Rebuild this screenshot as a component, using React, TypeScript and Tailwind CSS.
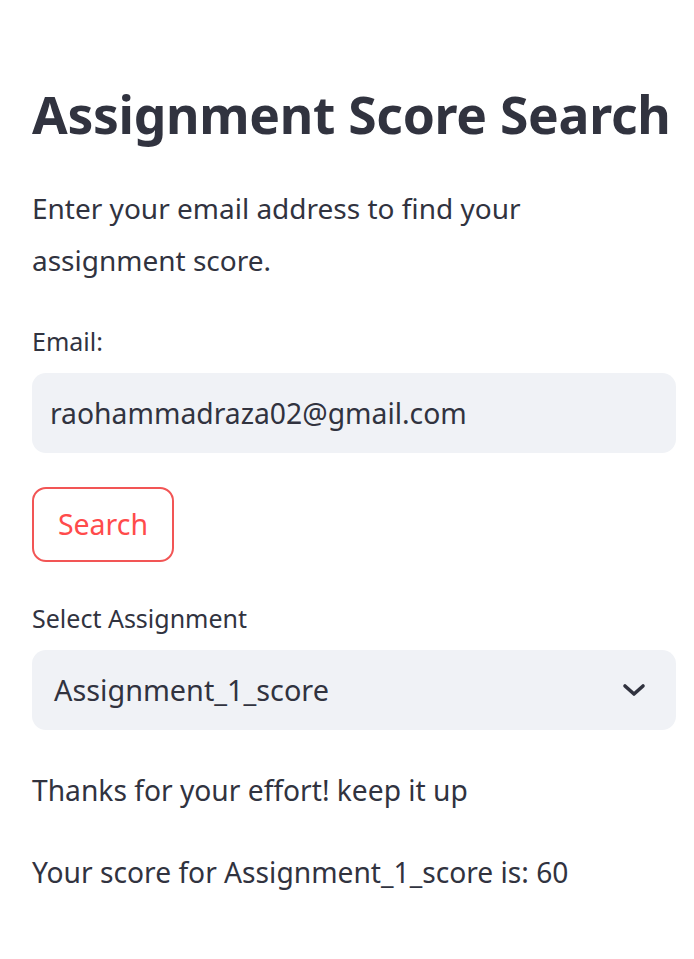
export default function App() {
  return (
    <div
      className="min-h-screen bg-white text-[#31333f]"
      style={{ fontFamily: '"Noto Sans", "Open Sans", sans-serif' }}
    >
      <div className="px-8 pt-[84px]">
        <h1 className="text-[51.6px] leading-[60px] font-bold tracking-[-0.3px] whitespace-nowrap">Assignment Score Search</h1>

        <p className="mt-[38px] text-[28px] leading-[52px] max-w-[560px]">
          Enter your email address to find your assignment score.
        </p>

        <label className="block mt-[39px] text-[25px] leading-[32px]">Email:</label>
        <div className="mt-[16px] h-[80px] w-[644px] rounded-[14px] bg-[#f0f2f6] flex items-center px-[18px] text-[28.3px]">
          raohammadraza02@gmail.com
        </div>

        <button className="mt-[34px] h-[75px] w-[142px] rounded-[14px] border-2 border-[#f25555] text-[#ff4b4b] text-[28.5px] flex items-center justify-center">
          Search
        </button>

        <label className="block mt-[40px] text-[25px] leading-[32px]">Select Assignment</label>
        <div className="mt-[16px] h-[80px] w-[644px] rounded-[14px] bg-[#f0f2f6] flex items-center justify-between pl-[22px] pr-[30px] text-[28.8px]">
          <span>Assignment_1_score</span>
          <svg width="24" height="14" viewBox="0 0 24 14" fill="none" stroke="currentColor" strokeWidth="3.6" strokeLinecap="round" strokeLinejoin="round">
            <path d="M3 3 L12 11 L21 3" />
          </svg>
        </div>

        <p className="mt-[40px] text-[28.2px] leading-[40px]">Thanks for your effort! keep it up</p>
        <p className="mt-[42px] text-[28.2px] leading-[40px]">Your score for Assignment_1_score is: 60</p>
      </div>
    </div>
  )
}
